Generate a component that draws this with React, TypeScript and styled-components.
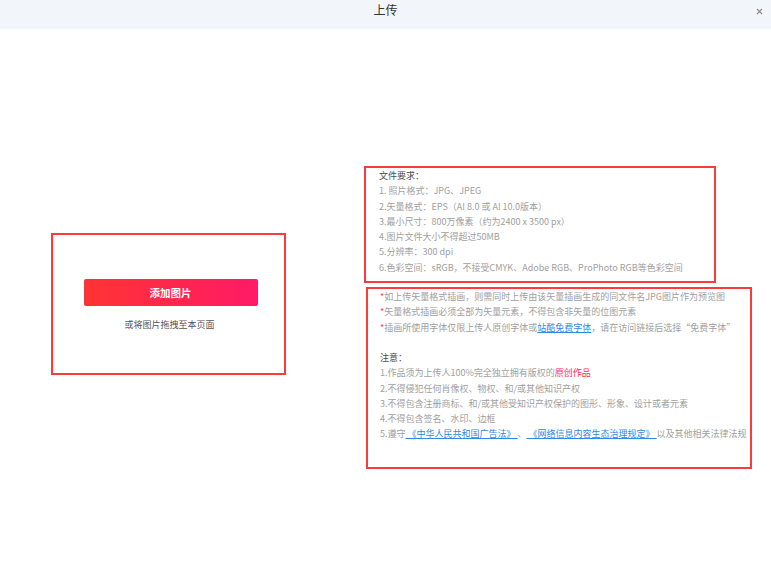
import React from "react";
import styled, { createGlobalStyle } from "styled-components";

const Global = createGlobalStyle`
  html, body { margin: 0; padding: 0; background: #fff; }
  body { font-family: "Noto Sans CJK SC", "Noto Sans", sans-serif; }
  * { box-sizing: border-box; }
`;

const Page = styled.div`
  width: 771px;
  height: 580px;
  background: #fff;
  display: flex;
  flex-direction: column;
`;

const Header = styled.div`
  height: 29px;
  background: #f2f5f9;
  display: flex;
  align-items: flex-start;
  justify-content: center;
  position: relative;
`;

const Title = styled.div`
  font-size: 12px;
  line-height: 12px;
  margin-top: 4px;
  color: #333;
`;

const Close = styled.button`
  position: absolute;
  right: 6px;
  top: 5px;
  width: 12px;
  height: 12px;
  padding: 0;
  border: none;
  background: transparent;
  display: flex;
  align-items: center;
  justify-content: center;
`;

const Main = styled.div`
  display: flex;
  align-items: flex-start;
  padding-left: 51px;
`;

const DropBox = styled.div`
  margin-top: 204px;
  width: 235px;
  height: 142px;
  border: 2px solid #fb3a3a;
  display: flex;
  flex-direction: column;
  align-items: center;
  padding-top: 44px;
`;

const AddButton = styled.button`
  width: 174px;
  height: 27px;
  border: none;
  border-radius: 2px;
  background: linear-gradient(90deg, #ff3434 0%, #ff1a66 100%);
  color: #fff;
  font-family: inherit;
  font-size: 10.5px;
  font-weight: 700;
  cursor: pointer;
  margin-left: 4px;
`;

const DragHint = styled.div`
  margin-top: 13px;
  font-size: 9px;
  line-height: 12px;
  color: #555;
  margin-left: 2px;
`;

const RightCol = styled.div`
  margin-left: 78px;
  margin-top: 137px;
  display: flex;
  flex-direction: column;
  align-items: flex-start;
`;

const InfoBox = styled.div<{ $w: number; $h: number; $offset?: number }>`
  width: ${(p) => p.$w}px;
  height: ${(p) => p.$h}px;
  border: 2px solid #fb3a3a;
  padding: 0 0 0 ${(p) => (p.$offset ? 12 : 13)}px;
  margin-left: ${(p) => p.$offset || 0}px;
  margin-top: ${(p) => (p.$offset ? 4 : 0)}px;
  font-size: 9px;
  line-height: 15.25px;
  color: #a0a0a0;
  white-space: nowrap;
`;

const Line = styled.div<{ $dark?: boolean }>`
  color: ${(p) => (p.$dark ? "#4a4a4a" : "#a0a0a0")};
  font-weight: 400;
  min-height: 15.25px;
`;

const Star = styled.span`
  color: #ff3b4e;
`;

const Red = styled.span`
  color: #ff2d55;
`;

const Link = styled.a`
  color: #2f88e8;
  text-decoration: underline;
`;

export default function App() {
  return (
    <Page>
      <Global />
      <Header>
        <Title>上传</Title>
        <Close aria-label="close">
          <svg width="7" height="7" viewBox="0 0 7 7">
            <path d="M1 1L6 6M6 1L1 6" stroke="#8a8a8a" strokeWidth="1.1" />
          </svg>
        </Close>
      </Header>
      <Main>
        <DropBox>
          <AddButton>添加图片</AddButton>
          <DragHint>或将图片拖拽至本页面</DragHint>
        </DropBox>
        <RightCol>
          <InfoBox $w={352} $h={117}>
            <Line $dark>文件要求：</Line>
            <Line>1. 照片格式：JPG、JPEG</Line>
            <Line>2.矢量格式：EPS（AI 8.0 或 AI 10.0版本）</Line>
            <Line>3.最小尺寸：800万像素（约为2400 x 3500 px）</Line>
            <Line>4.图片文件大小不得超过50MB</Line>
            <Line>5.分辨率：300 dpi</Line>
            <Line>6.色彩空间：sRGB，不接受CMYK、Adobe RGB、ProPhoto RGB等色彩空间</Line>
          </InfoBox>
          <InfoBox $w={386} $h={182} $offset={2}>
            <Line>
              <Star>*</Star>如上传矢量格式插画，则需同时上传由该矢量插画生成的同文件名JPG图片作为预览图
            </Line>
            <Line>
              <Star>*</Star>矢量格式插画必须全部为矢量元素，不得包含非矢量的位图元素
            </Line>
            <Line>
              <Star>*</Star>插画所使用字体仅限上传人原创字体或<Link>站酷免费字体</Link>，请在访问链接后选择“免费字体”
            </Line>
            <Line />
            <Line $dark>注意：</Line>
            <Line>
              1.作品须为上传人100%完全独立拥有版权的<Red>原创作品</Red>
            </Line>
            <Line>2.不得侵犯任何肖像权、物权、和/或其他知识产权</Line>
            <Line>3.不得包含注册商标、和/或其他受知识产权保护的图形、形象、设计或者元素</Line>
            <Line>4.不得包含签名、水印、边框</Line>
            <Line>
              5.遵守<Link> 《中华人民共和国广告法》 </Link>、<Link> 《网络信息内容生态治理规定》 </Link>以及其他相关法律法规
            </Line>
          </InfoBox>
        </RightCol>
      </Main>
    </Page>
  );
}
